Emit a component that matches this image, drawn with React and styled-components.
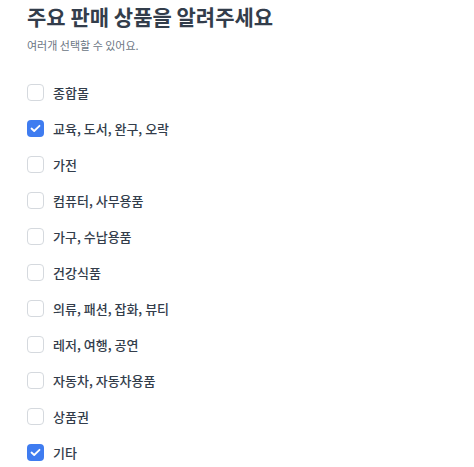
import React, { useState } from 'react';
import styled, { createGlobalStyle } from 'styled-components';

const GlobalStyle = createGlobalStyle`
  html, body { margin: 0; padding: 0; background: #fff; }
  body { font-family: "Noto Sans CJK KR", "Noto Sans", sans-serif; }
`;

const Page = styled.div`
  padding: 0 0 0 27px;
`;

const Title = styled.h1`
  margin: 0;
  padding-top: 1px;
  font-size: 21px;
  line-height: 30px;
  font-weight: 700;
  color: #333d4b;
`;

const Sub = styled.p`
  margin: 6px 0 0;
  font-size: 11px;
  line-height: 16px;
  color: #6b7684;
`;

const List = styled.ul`
  list-style: none;
  margin: 21px 0 0;
  padding: 0;
`;

const Row = styled.li`
  display: flex;
  align-items: center;
  gap: 9px;
  height: 36px;
  cursor: pointer;
`;

const Box = styled.span`
  width: 17px;
  height: 17px;
  box-sizing: border-box;
  border-radius: 4px;
  display: flex;
  align-items: center;
  justify-content: center;
  background: ${p => (p.$on ? '#3f7cf0' : '#fff')};
  border: ${p => (p.$on ? 'none' : '1.5px solid #d5d9de')};
`;

const Label = styled.span`
  font-size: 13px;
  color: #333d4b;
  font-weight: 500;
`;

const items = [
  '종합몰',
  '교육, 도서, 완구, 오락',
  '가전',
  '컴퓨터, 사무용품',
  '가구, 수납용품',
  '건강식품',
  '의류, 패션, 잡화, 뷰티',
  '레저, 여행, 공연',
  '자동차, 자동차용품',
  '상품권',
  '기타',
];

export default () => {
  const [checked, setChecked] = useState([1, 10]);
  const toggle = i =>
    setChecked(c => (c.includes(i) ? c.filter(x => x !== i) : [...c, i]));

  return (
    <Page>
      <GlobalStyle />
      <Title>주요 판매 상품을 알려주세요</Title>
      <Sub>여러개 선택할 수 있어요.</Sub>
      <List>
        {items.map((t, i) => (
          <Row key={t} onClick={() => toggle(i)}>
            <Box $on={checked.includes(i)}>
              {checked.includes(i) && (
                <svg width="11" height="9" viewBox="0 0 11 9" fill="none">
                  <path d="M1.5 4.5L4.2 7L9.5 1.8" stroke="#fff" strokeWidth="1.8" strokeLinecap="round" strokeLinejoin="round" />
                </svg>
              )}
            </Box>
            <Label>{t}</Label>
          </Row>
        ))}
      </List>
    </Page>
  );
};
